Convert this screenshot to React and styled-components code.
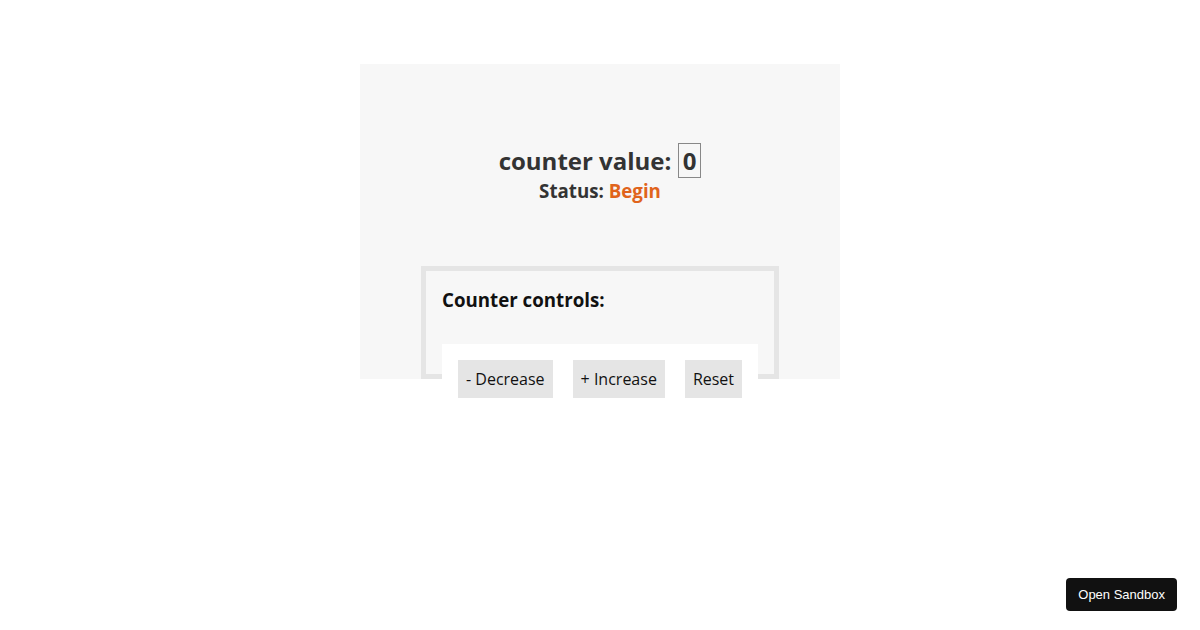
import React, { useState } from 'react';
import styled, { createGlobalStyle } from 'styled-components';

const GlobalStyle = createGlobalStyle`
  html, body {
    min-height: 100%;
  }
  body {
    margin: 0;
    min-height: 100vh;
    background: #ffffff;
    font-family: "Open Sans", "Liberation Sans", sans-serif;
  }
`;

const statusFor = (value) => {
  if (value === 0) return 'Begin';
  return value > 0 ? 'Positive' : 'Negative';
};

const App = () => {
  const [count, setCount] = useState(0);

  return (
    <>
      <GlobalStyle />
      <Panel>
        <Display>
          <ValueLine>
            counter value: <ValueBox>{count}</ValueBox>
          </ValueLine>
          <StatusLine>
            Status: <StatusText>{statusFor(count)}</StatusText>
          </StatusLine>
        </Display>
        <Controls>
          <ControlsTitle>Counter controls:</ControlsTitle>
          <ButtonRow>
            <Button onClick={() => setCount(count - 1)}>- Decrease</Button>
            <Button onClick={() => setCount(count + 1)}>+ Increase</Button>
            <Button onClick={() => setCount(0)}>Reset</Button>
          </ButtonRow>
        </Controls>
      </Panel>
      <SandboxButton>Open Sandbox</SandboxButton>
    </>
  );
};

export default App;

const Panel = styled.div`
  width: 480px;
  height: 315px;
  margin: 64px auto 0;
  background: #f7f7f7;
  display: flex;
  flex-direction: column;
  align-items: center;
  box-sizing: border-box;
  padding-top: 79px;
`;

const Display = styled.div`
  display: flex;
  flex-direction: column;
  align-items: center;
  color: #333333;
  font-weight: 700;
`;

const ValueLine = styled.div`
  font-size: 24px;
  line-height: 33px;
`;

const ValueBox = styled.span`
  display: inline-block;
  border: 1px solid #888888;
  padding: 0 4px;
`;

const StatusLine = styled.div`
  font-size: 18.72px;
  line-height: 25px;
`;

const StatusText = styled.span`
  color: #e0641c;
`;

const Controls = styled.div`
  margin-top: auto;
  width: 358px;
  height: 113px;
  box-sizing: border-box;
  border: 5px solid #e5e5e5;
  padding: 16px;
`;

const ControlsTitle = styled.h3`
  margin: 0 0 32px;
  font-size: 18.72px;
  line-height: 25px;
  font-weight: 700;
  color: #111111;
`;

const ButtonRow = styled.div`
  display: flex;
  gap: 20px;
  padding: 16px;
  background: #ffffff;
`;

const Button = styled.button`
  flex-shrink: 0;
  white-space: nowrap;
  border: none;
  background: #e5e5e5;
  color: #111111;
  font-family: "Open Sans", "Liberation Sans", sans-serif;
  font-size: 16px;
  line-height: 22px;
  padding: 8px;
  cursor: pointer;
`;

const SandboxButton = styled.button`
  position: fixed;
  right: 23px;
  bottom: 19px;
  height: 33px;
  padding: 0 12px;
  border: none;
  border-radius: 4px;
  background: #111111;
  color: #ffffff;
  font-family: "Liberation Sans", Arial, sans-serif;
  font-size: 13px;
`;
